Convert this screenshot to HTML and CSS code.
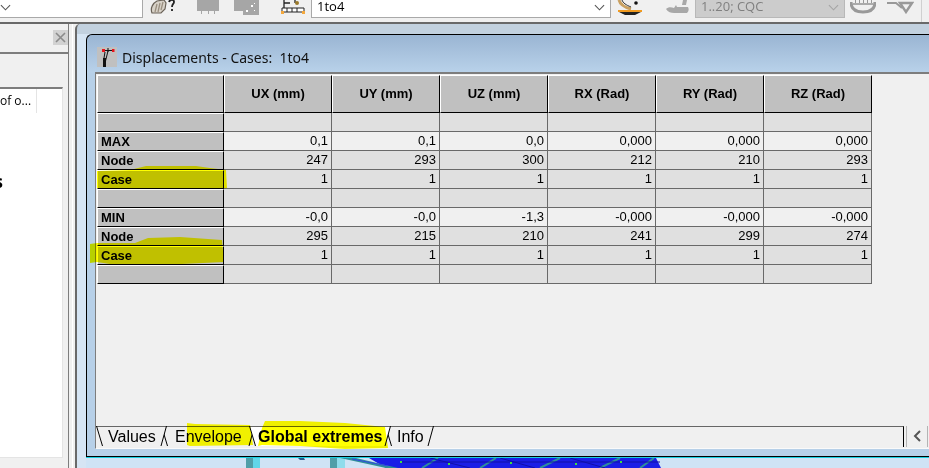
FILE: index.html
```html
<!DOCTYPE html>
<html lang="en">
<head>
<meta charset="utf-8">
<title>Displacements - Cases: 1to4</title>
<link rel="stylesheet" href="styles.css">
</head>
<body>
<header class="toolbar">
  <div class="select select-first"><svg class="chev" viewBox="0 0 12 7"><path d="M1 1l5 5 5-5" fill="none" stroke="#555" stroke-width="1.2"/></svg></div>
  <svg class="ico ico-hand" viewBox="0 0 26 14"><path d="M2 13C0 8 3 3 7 1l7-1 2 3-1 6-4 4z" fill="#d8d2c8" stroke="#6a6258" stroke-width="1.2"/><path d="M5 12l2-8M8 12l2-9M11 10l2-8" stroke="#9a8f80" stroke-width="1.3"/><path d="M19 2c1-3 5-3 5 0 0 2-2 2-2 5M22 9v2" fill="none" stroke="#222" stroke-width="1.8"/></svg>
  <svg class="ico ico-box1" viewBox="0 0 22 14"><path d="M0 0h22v11H0z" fill="#a6a6a6"/><path d="M4 11h1v3H4zM11 11h1v3h-1zM17 11h1v3h-1z" fill="#a6a6a6"/></svg>
  <svg class="ico ico-box2" viewBox="0 0 25 16"><path d="M0 0h25v15H9v-4H0z" fill="#a6a6a6"/><path d="M17 5h2v2h-2zM20 3h1v1h-1zM12 10h2v2h-2zM20 10h1v1h-1z" fill="#fff"/></svg>
  <svg class="ico ico-build" viewBox="0 0 24 14"><path d="M3 0v11M3 3h6M14 0v3" stroke="#222" stroke-width="1.3" fill="none"/><circle cx="16" cy="3" r="2" fill="#9b7a2a"/><path d="M1 8h22v4H1z" fill="#fff" stroke="#222"/><path d="M6 8v4M11 8v4M16 8v4" stroke="#222"/><path d="M0 11h3v3H0zM21 11h3v3h-3z" fill="#f4a83c"/></svg>
  <div class="select select-case"><span class="select-text">1to4</span><svg class="chev" viewBox="0 0 12 7"><path d="M1 1l5 5 5-5" fill="none" stroke="#555" stroke-width="1.2"/></svg></div>
  <svg class="ico ico-boat" viewBox="0 0 26 16"><path d="M2 0c1 4 4 7 12 9" fill="none" stroke="#c9a060" stroke-width="3"/><path d="M5 0c1 3 4 5 9 7" fill="none" stroke="#333" stroke-width="1"/><path d="M1 10h24v2H1z" fill="#f09a20"/><path d="M2 12h22l-6 3H8z" fill="#222"/><circle cx="19" cy="3" r="1.8" fill="#111"/></svg>
  <svg class="ico ico-gray1" viewBox="0 0 24 14"><path d="M0 9c2-2 5-2 8-1l2-3 1 2h11c1 2 1 4-1 6H8C5 13 2 12 0 9z" fill="#a8a8a8"/><path d="M17 0h4l-1 5h-4z" fill="#a8a8a8"/></svg>
  <div class="select select-mode"><span class="select-text">1..20; CQC</span><svg class="chev" viewBox="0 0 12 7"><path d="M1 1l5 5 5-5" fill="none" stroke="#a4a4a4" stroke-width="1.2"/></svg></div>
  <svg class="ico ico-bowl" viewBox="0 0 26 14"><path d="M1 2c0 7 5 10 12 10s12-3 12-10" fill="none" stroke="#999" stroke-width="3"/><path d="M3 3h20v2H3z" fill="#aaa"/><path d="M5 0h1v3H5zM9 0h1v3H9zM13 0h1v3h-1zM17 0h1v3h-1zM21 0h1v3h-1z" fill="#999"/></svg>
  <svg class="ico ico-gear" viewBox="0 0 27 14"><path d="M0 3h9l6 5" fill="none" stroke="#999" stroke-width="2"/><path d="M13 3h12l-6 9z" fill="none" stroke="#999" stroke-width="2.4"/></svg>
  <div class="toolbar-end"></div>
</header>

<main class="main">
  <aside class="side">
    <div class="side-body">
      <div class="side-bar"><button class="close" type="button" aria-label="Close"><svg viewBox="0 0 11 11"><path d="M1 1l9 9M10 1l-9 9" stroke="#8b8b8b" stroke-width="1.6"/></svg></button></div>
      <div class="side-inner">
        <div class="list">
          <div class="list-head"><span class="list-cell">of o...</span></div>
          <div class="list-word">s</div>
        </div>
      </div>
    </div>
  </aside>
  <div class="split"></div>

  <section class="frame">
    <div class="win">
      <div class="win-title">
        <svg class="win-icon" viewBox="0 0 20 20"><path d="M0 0h20v20H0z" fill="#c0c0c0"/><path d="M5 2h3v3H5zM15 2h2.500v3H15z" fill="#e8141c"/><path d="M8 3.500h7M11 1v4" stroke="#111" stroke-width="1"/><path d="M6 11h3v9H6z" fill="#111"/><path d="M8 5L7 11M11 4L8.500 14" stroke="#111" stroke-width="1" fill="none"/></svg>
        <span class="win-text">Displacements - Cases:  1to4</span>
      </div>
      <div class="win-row">
        <div class="pane">
          <div class="grid">
            <div class="hd tall"></div><div class="hd tall col">UX (mm)</div><div class="hd tall col">UY (mm)</div><div class="hd tall col">UZ (mm)</div><div class="hd tall col">RX (Rad)</div><div class="hd tall col">RY (Rad)</div><div class="hd tall col">RZ (Rad)</div>

            <div class="hd"></div><div class="td"></div><div class="td"></div><div class="td"></div><div class="td"></div><div class="td"></div><div class="td"></div>

            <div class="hd">MAX</div><div class="td lt">0,1</div><div class="td lt">0,1</div><div class="td lt">0,0</div><div class="td lt">0,000</div><div class="td lt">0,000</div><div class="td lt">0,000</div>
            <div class="hd">Node</div><div class="td">247</div><div class="td">293</div><div class="td">300</div><div class="td">212</div><div class="td">210</div><div class="td">293</div>
            <div class="hd">Case</div><div class="td">1</div><div class="td">1</div><div class="td">1</div><div class="td">1</div><div class="td">1</div><div class="td">1</div>

            <div class="hd"></div><div class="td"></div><div class="td"></div><div class="td"></div><div class="td"></div><div class="td"></div><div class="td"></div>

            <div class="hd">MIN</div><div class="td lt">-0,0</div><div class="td lt">-0,0</div><div class="td lt">-1,3</div><div class="td lt">-0,000</div><div class="td lt">-0,000</div><div class="td lt">-0,000</div>
            <div class="hd">Node</div><div class="td">295</div><div class="td">215</div><div class="td">210</div><div class="td">241</div><div class="td">299</div><div class="td">274</div>
            <div class="hd">Case</div><div class="td">1</div><div class="td">1</div><div class="td">1</div><div class="td">1</div><div class="td">1</div><div class="td">1</div>

            <div class="hd"></div><div class="td"></div><div class="td"></div><div class="td"></div><div class="td"></div><div class="td"></div><div class="td"></div>
          </div>

          <div class="tabbar">
            <div class="tab tab-values"><svg class="tab-bg" viewBox="0 0 71 21"><path d="M.5 0L6.500 20H65L70.500 0z" fill="#f0f0f0"/><path d="M0 .5H71" stroke="#666"/><path d="M.5 0L6.500 20M65 20L70.500 0" stroke="#000" fill="none"/></svg><span class="tab-text">Values</span></div>
            <div class="tab tab-envelope"><svg class="tab-bg" viewBox="0 0 94 21"><path d="M.5 0L6.500 20H88L93.500 0z" fill="#f0f0f0"/><path d="M0 .5H94" stroke="#666"/><path d="M.5 0L6.500 20M88 20L93.500 0" stroke="#000" fill="none"/></svg><span class="tab-text">Envelope</span></div>
            <div class="tab tab-global"><svg class="tab-bg" viewBox="0 0 142 21"><path d="M.5 0L6.500 20H136L141.500 0z" fill="#fff"/><path d="M0 .5H142" stroke="#666"/><path d="M.5 0L6.500 20M136 20L141.500 0" stroke="#000" fill="none"/></svg><span class="tab-text">Global extremes</span></div>
            <div class="tab tab-info"><svg class="tab-bg" viewBox="0 0 49 21"><path d="M.5 0L6.500 20H43L48.500 0z" fill="#f0f0f0"/><path d="M0 .5H49" stroke="#666"/><path d="M.5 0L6.500 20M43 20L48.500 0" stroke="#000" fill="none"/></svg><span class="tab-text">Info</span></div>
            <div class="tab-rest"></div>
            <div class="tab-scroll"><svg viewBox="0 0 8 12"><path d="M7 1L2 6l5 5" fill="none" stroke="#555" stroke-width="2"/></svg></div>
          </div>
        </div>
      </div>
    </div>
    <div class="scene">
      <svg viewBox="86 458 843 10" preserveAspectRatio="none">
        <path d="M246 458h7v10h-7z" fill="#4f9ea8"/><path d="M253 458h7v10h-7z" fill="#62d6e8"/>
        <path d="M330 458h7v10h-7z" fill="#4f9ea8"/><path d="M337 458h8v10h-8z" fill="#8fdcec"/>
        <path d="M298 458h6l1 2h-5z" fill="#2a5a8a"/>
        <path d="M369 458H656L661 468H386z" fill="#1a1ee6"/>
        <path d="M340 458L386 468H398L356 458z" fill="#2f8f98"/>
        <path d="M352 459L388 466" stroke="#3448e0" stroke-width="1"/>
        <path d="M422 468L438 458M480 468L496 458M540 468L560 458M600 468L620 458M640 468L654 458" stroke="#2f8f98" stroke-width="2"/>
        <path d="M400 462L660 462" stroke="#1010a8" stroke-width="1"/>
        <path d="M430 458L470 468M500 458L535 468M570 458L605 468" stroke="#1010a8" stroke-width="1"/>
        <path d="M400 461h2v2h-2zM448 463h2v2h-2zM510 462h2v2h-2zM575 463h2v2h-2zM620 461h2v2h-2z" fill="#3fe03f"/>
      </svg>
    </div>
  </section>
</main>

<svg class="marks" viewBox="0 0 929 468">
  <path d="M97 171L130 170L146 166L196 166L210 168L226 170L227 188L212 189L150 188L140 189L97 188z" fill="#ffff00"/>
  <path d="M90 244L97 243L135 243L148 238L180 237L222 240L224 262L182 264L150 264L116 265L97 262L90 263z" fill="#ffff00"/>
  <path d="M187 423L195 424L250 425L253 445L190 446L187 445z" fill="#ffff00"/>
  <path d="M265 421L300 421L345 423L385 427L388 448L345 449L300 446L262 445L258 446L262 428z" fill="#ffff00"/>
</svg>
</body>
</html>
```
FILE: styles.css
```css
* { box-sizing: border-box; }
html, body { margin: 0; height: 468px; overflow: hidden; }
body { position: relative; background: #f0f0f0; font-family: "Liberation Sans", Arial, sans-serif; color: #000; }

/* toolbar */
.toolbar { display: flex; align-items: flex-start; height: 24px; background: #f0f0f0; border-bottom: 2px solid #696969; overflow: hidden; }
.select { display: flex; align-items: flex-start; justify-content: space-between; height: 18px; background: #fff; border: 1px solid #a9a9a9; border-top: 0; font-family: "Open Sans", sans-serif; font-size: 13px; line-height: 12px; }
.select-text { padding-left: 5px; white-space: nowrap; }
.chev { width: 11px; height: 7px; margin: 4px 5px 0 0; flex: none; }
.select-first { width: 143px; border-left: 0; }
.select-case { width: 300px; margin-left: 6px; }
.select-mode { width: 150px; margin-left: 5px; background: #cccccc; border-color: #b8b8b8; color: #808080; }
.ico { display: block; flex: none; }
.ico-hand { width: 26px; height: 14px; margin-left: 7px; }
.ico-box1 { width: 22px; height: 14px; margin-left: 21px; }
.ico-box2 { width: 25px; height: 16px; margin-left: 15px; }
.ico-build { width: 24px; height: 14px; margin-left: 22px; }
.ico-boat { width: 26px; height: 16px; margin-left: 6px; }
.ico-gray1 { width: 24px; height: 14px; margin-left: 23px; }
.ico-bowl { width: 26px; height: 14px; margin-left: 5px; }
.ico-gear { width: 27px; height: 14px; margin-left: 11px; }
.toolbar-end { height: 22px; width: 1px; margin-left: 7px; background: #d0d0d0; flex: none; }

/* main row */
.main { display: flex; height: 444px; }
.side { width: 72px; flex: none; background: #f0f0f0; }
.side-body { width: 69px; height: 100%; border-right: 1px solid #7d7d7d; display: flex; flex-direction: column; }
.side-bar { height: 28px; display: flex; justify-content: flex-end; padding-top: 6px; flex: none; }
.close { width: 15px; height: 15px; padding: 2px; border: 0; background: #d2d2d2; display: block; }
.close svg { display: block; width: 11px; height: 11px; }
.side-inner { flex: 1; border-top: 2px solid #7d7d7d; padding-top: 33px; padding-bottom: 10px; display: flex; }
.list { width: 63px; background: #fff; border-top: 2px solid #7d7d7d; border-right: 1px solid #e4e4e4; border-bottom: 1px solid #e4e4e4; overflow: hidden; }
.list-head { height: 24px; }
.list-cell { display: block; width: 37px; height: 24px; border-right: 1px solid #e4e4e4; font-family: "Open Sans", sans-serif; font-size: 12px; line-height: 24px; white-space: nowrap; }
.list-word { margin: 56px 0 0 -6px; font-family: "Open Sans", sans-serif; font-weight: 700; font-size: 18px; line-height: 24px; }
.split { width: 3px; flex: none; background: #f0f0f0; border-left: 1px solid #fff; }

/* window frame */
.frame { flex: 1; min-width: 0; display: flex; flex-direction: column; border-left: 2px solid #696969; padding: 10px 0 0 9px; background: linear-gradient(#c2d1df 0 10px, #d6e5f4 10px); border-top-left-radius: 5px; }
.win { height: 423px; flex: none; display: flex; flex-direction: column; border: 1px solid #000; border-right: 0; border-top-left-radius: 6px; background: linear-gradient(#9ab5d3 0, #b9d2ea 38px, #b7d0e8 38px); }
.win-title { height: 37px; flex: none; display: flex; align-items: center; padding-left: 10px; padding-top: 7px; }
.win-icon { width: 20px; height: 20px; flex: none; }
.win-text { margin-left: 5px; font-family: "Noto Sans", sans-serif; font-size: 14px; white-space: pre; color: #111; }
.win-row { height: 377px; flex: none; padding-left: 8px; }
.pane { height: 100%; display: flex; flex-direction: column; background: #f0f0f0; border-top: 2px solid #7d7d7d; border-left: 1px solid #7d7d7d; border-bottom: 1px solid #fafafa; padding: 1px 0 0 1px; }

/* data grid */
.grid { display: grid; grid-template-columns: 127px repeat(6, 108px); grid-template-rows: 38px repeat(9, 19px); width: 775px; font-size: 13px; line-height: 17px; }
.hd { background: #c0c0c0; border: 1px solid #000; border-top-color: #fff; border-left-color: #fff; font-weight: 700; padding-left: 3px; }
.hd.tall { display: flex; align-items: center; padding-bottom: 2px; }
.hd.col { justify-content: center; padding-left: 0; }
.td { background: #e0e0e0; border-right: 1px solid #696969; border-bottom: 1px solid #696969; text-align: right; padding-right: 3px; }
.td.lt { background: #f0f0f0; }

/* tabs */
.tabbar { margin-top: auto; display: flex; isolation: isolate; height: 21px; margin-left: -1px; margin-bottom: 1px; font-size: 16px; line-height: 21px; }
.tab { position: relative; flex: none; height: 21px; white-space: nowrap; }
.tab-bg { position: absolute; left: 0; top: 0; width: 100%; height: 100%; }
.tab-text { position: relative; }
.tab-values { width: 71px; padding-left: 12px; z-index: 2; }
.tab-envelope { width: 94px; margin-left: -6px; padding-left: 14px; z-index: 1; }
.tab-global { width: 142px; margin-left: -6px; padding-left: 9px; font-weight: 700; z-index: 3; }
.tab-info { width: 49px; margin-left: -6px; padding-left: 12px; z-index: 1; }
.tab-rest { width: 470px; border-top: 1px solid #666; border-right: 1px solid #000; flex: none; }
.tab-scroll { flex: 1; margin: 0 1px 0 2px; border-left: 1px solid #b4b4b4; border-right: 1px solid #b4b4b4; padding: 4px 0 0 6px; }
.tab-scroll svg { display: block; width: 8px; height: 12px; }

/* view behind */
.scene { flex: 1; min-height: 0; border-top: 1px solid #19cfe0; background: #cfe3f5; }
.scene svg { display: block; width: 100%; height: 100%; }

/* marker strokes on top of the capture */
.marks { position: absolute; left: 0; top: 0; width: 929px; height: 468px; mix-blend-mode: multiply; pointer-events: none; }
```
